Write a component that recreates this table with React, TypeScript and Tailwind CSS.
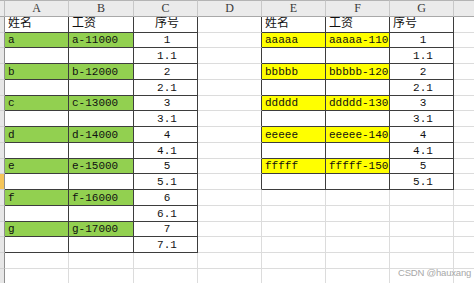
import clsx from 'clsx';

// column headers: row-header strip, A..H (H is off-screen, label not visible)
const COLS = ['', 'A', 'B', 'C', 'D', 'E', 'F', 'G', ''];

const LEFT: [string, string, string][] = [
  ['姓名', '工资', '序号'],
  ['a', 'a-11000', '1'],
  ['', '', '1.1'],
  ['b', 'b-12000', '2'],
  ['', '', '2.1'],
  ['c', 'c-13000', '3'],
  ['', '', '3.1'],
  ['d', 'd-14000', '4'],
  ['', '', '4.1'],
  ['e', 'e-15000', '5'],
  ['', '', '5.1'],
  ['f', 'f-16000', '6'],
  ['', '', '6.1'],
  ['g', 'g-17000', '7'],
  ['', '', '7.1'],
];

// F column shows only what fits before G
const RIGHT: [string, string, string][] = [
  ['姓名', '工资', '序号'],
  ['aaaaa', 'aaaaa-110', '1'],
  ['', '', '1.1'],
  ['bbbbb', 'bbbbb-120', '2'],
  ['', '', '2.1'],
  ['ddddd', 'ddddd-130', '3'],
  ['', '', '3.1'],
  ['eeeee', 'eeeee-140', '4'],
  ['', '', '4.1'],
  ['fffff', 'fffff-150', '5'],
  ['', '', '5.1'],
];

const ROWS = 17;

function Cell({ row, col }: { row: number; col: number }) {
  // row: 1-based sheet row, col: 1..8 (A..H)
  const inLeft = row <= 15 && col >= 1 && col <= 3;
  const inRight = row <= 11 && col >= 5 && col <= 7;
  let text = '';
  let fill = '';
  if (inLeft) {
    text = LEFT[row - 1][col - 1];
    if (row > 1 && col < 3 && text) fill = 'bg-[#92d050]';
  }
  if (inRight) {
    text = RIGHT[row - 1][col - 5];
    if (row > 1 && col < 7 && text) fill = 'bg-[#ffff00]';
  }
  const darkRight = inLeft || inRight || (col === 4 && row <= 11);
  const darkBottom = inLeft || inRight;
  const center = (row > 1 && (col === 3 || col === 7)) || (row === 1 && col === 3);
  return (
    <div
      className={clsx(
        'border-r border-b flex items-end overflow-hidden whitespace-nowrap pl-[3px] text-[#111]',
        darkRight ? 'border-r-[#3d3d3d]' : 'border-r-[#dcdcdc]',
        darkBottom ? 'border-b-[#3d3d3d]' : 'border-b-[#dcdcdc]',
        fill || 'bg-white',
        center && 'justify-center pl-0',
        row === 1 ? 'text-[12px] leading-[15px]' : 'text-[11px] leading-[14px]'
      )}
    >
      {text}
    </div>
  );
}

export default function App() {
  return (
    <div className="relative w-[474px] h-[283px] overflow-hidden bg-white font-['Liberation_Mono','Noto_Sans_CJK_SC',monospace]">
      <div className="grid grid-cols-[5px_64px_65px_64px_64px_64px_64px_64px_64px] grid-rows-[17px_16px_15px_16px_16px_16px_15px_16px_16px_16px_15px_16px_16px_16px_15px_16px_16px_15px]">
        {/* column header row */}
        {COLS.map((c, i) => (
          <div
            key={i}
            className={clsx(
              'border-t border-t-[#b4b4b4] border-b border-b-[#a9a9a9] bg-[#ebebeb] flex items-end justify-center',
              "font-['Liberation_Serif',serif] text-[12px] leading-[15px] text-[#3a3a3a]",
              i === 0 ? 'border-r border-r-[#bdbdbd]' : 'border-r border-r-[#c8c8c8]'
            )}
          >
            {c}
          </div>
        ))}
        {Array.from({ length: ROWS }, (_, r) => r + 1).map((row) => (
          <div key={row} className="contents">
            <div
              className={clsx(
                'border-r border-r-[#8f8f8f] border-b border-b-[#d2d2d2]',
                row === 11 ? 'bg-[#f5c55a]' : 'bg-[#e7e7e7]'
              )}
            />
            {[1, 2, 3, 4, 5, 6, 7, 8].map((col) => (
              <Cell key={col} row={row} col={col} />
            ))}
          </div>
        ))}
      </div>
      <div className="absolute left-[398px] top-[266px] font-['Liberation_Sans',Arial,sans-serif] text-[9.5px] tracking-[-0.2px] text-[#a8a8a8]">
        CSDN @hauxang
      </div>
    </div>
  );
}
